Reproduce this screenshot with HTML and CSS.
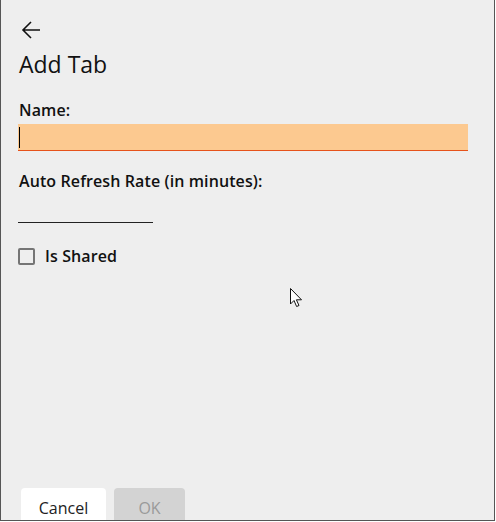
FILE: index.html
```html
<!DOCTYPE html>
<html>
<head>
<meta charset="utf-8">
<link rel="stylesheet" href="styles.css">
</head>
<body>
<div class="frame">
  <div class="content">
    <button class="back" aria-label="Back">
      <svg width="20" height="20" viewBox="0 0 20 20"><path d="M10 2 L2 10 L10 18 M2 10 H19" fill="none" stroke="#111" stroke-width="1.6"/></svg>
    </button>
    <h1 class="title">Add Tab</h1>
    <label class="label">Name:</label>
    <div class="input focused"><span class="caret"></span></div>
    <label class="label label-rate">Auto Refresh Rate (in minutes):</label>
    <div class="input-short"></div>
    <div class="check-row">
      <span class="checkbox"></span>
      <span class="check-label">Is Shared</span>
    </div>
    <div class="actions">
      <button class="btn btn-cancel">Cancel</button>
      <button class="btn btn-ok" disabled>OK</button>
    </div>
  </div>
  <svg class="cursor" width="14" height="21" viewBox="0 0 14 21"><path d="M0.5 0.5 V16 L4 12.5 L6.6 18.5 L9 17.5 L6.4 11.8 H11.5 Z" fill="#fff" stroke="#111" stroke-width="1"/></svg>
</div>
</body>
</html>
```
FILE: styles.css
```css
html, body {
  margin: 0;
  padding: 0;
  background: #fff;
}
.frame {
  position: relative;
  box-sizing: border-box;
  width: 495px;
  height: 521px;
  background: #eeeeee;
  border-left: 1px solid #555;
  border-right: 1px solid #555;
  border-bottom: 1px solid #555;
  overflow: hidden;
  font-family: "Open Sans", "Noto Sans", sans-serif;
  color: #111;
}
.content {
  display: flex;
  flex-direction: column;
  align-items: flex-start;
  height: 100%;
  padding: 20px 0 0 17px;
  box-sizing: border-box;
}
.back {
  border: 0;
  background: none;
  padding: 0;
  margin: 0 0 0 3px;
  width: 20px;
  height: 20px;
  display: block;
}
.back svg { display: block; }
.title {
  margin: 9px 0 0 1px;
  font-size: 23px;
  font-weight: 400;
  line-height: 31px;
}
.label {
  margin: 19px 0 0 1px;
  font-size: 16px;
  font-weight: 600;
  line-height: 22px;
  letter-spacing: 0.1px;
}
.input {
  margin-top: 3px;
  width: 449px;
  height: 26px;
  background: #fcc990;
  border-bottom: 1px solid #e6521a;
  display: flex;
  align-items: center;
  padding-left: 1px;
  box-sizing: content-box;
}
.caret {
  display: block;
  width: 1px;
  height: 21px;
  background: #000;
}
.label-rate {
  margin-top: 19px;
}
.input-short {
  margin-top: 30px;
  width: 135px;
  height: 0;
  border-bottom: 1px solid #222;
}
.check-row {
  display: flex;
  align-items: center;
  margin-top: 22px;
  gap: 10px;
}
.checkbox {
  display: block;
  width: 13px;
  height: 13px;
  border: 2px solid #757575;
  border-radius: 2px;
}
.check-label {
  font-size: 16px;
  font-weight: 600;
  line-height: 22px;
  letter-spacing: 0.1px;
}
.actions {
  margin-top: auto;
  display: flex;
  gap: 8px;
  margin-left: 3px;
  margin-bottom: -3px;
}
.btn {
  border: 0;
  border-radius: 4px 4px 0 0;
  font-family: "Open Sans", "Noto Sans", sans-serif;
  font-size: 16px;
  height: 35px;
  padding: 4px 0 0;
  line-height: 22px;
}
.btn-cancel {
  width: 85px;
  background: #fff;
  color: #222;
}
.btn-ok {
  width: 71px;
  background: #d3d3d3;
  color: #9a9a9a;
}
.cursor {
  position: absolute;
  left: 289px;
  top: 288px;
}
```
